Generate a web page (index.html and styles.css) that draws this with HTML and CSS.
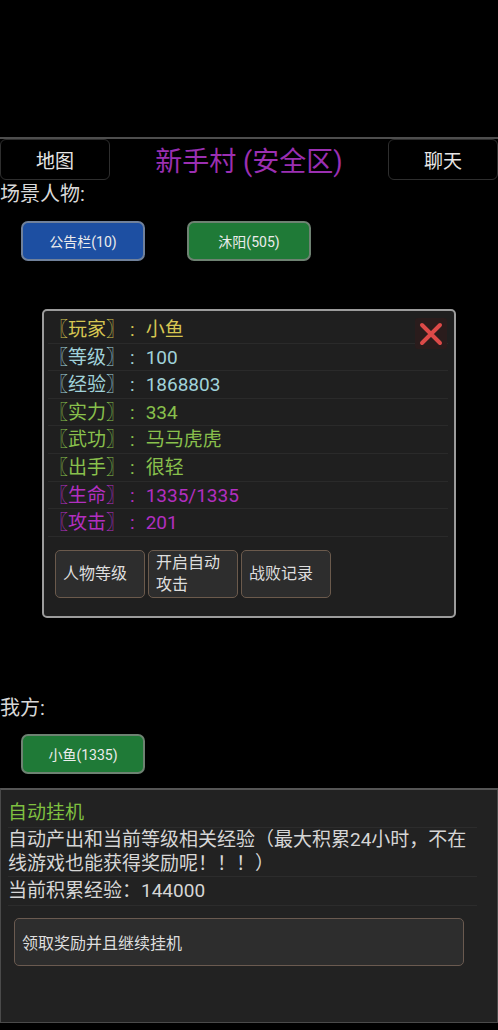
FILE: index.html
```html
<!DOCTYPE html>
<html lang="zh">
<head>
  <meta charset="UTF-8" />
  <meta name="viewport" content="width=device-width, initial-scale=1.0" />
  <title>新手村</title>
  <link rel="stylesheet" href="styles.css">
</head>
<body>

<div class="top-space"></div>

<!-- 顶部栏 -->
<div class="header">
  <div class="hbtn">地图</div>
  <div class="title">新手村 (安全区)</div>
  <div class="hbtn">聊天</div>
</div>

<div class="label">场景人物:</div>
<div class="chars">
  <div class="cbtn cbtn-blue">公告栏(10)</div>
  <div class="cbtn cbtn-green">沐阳(505)</div>
</div>

<!-- 人物信息窗口 -->
<div class="dialog">
  <div class="close">
    <svg width="24" height="24" viewBox="0 0 24 24"><path d="M3 3 L21 21 M21 3 L3 21" stroke="#dc4a48" stroke-width="4" stroke-linecap="round"/></svg>
  </div>
  <div class="rows">
    <div class="row c-yellow">〖玩家〗<span class="sep">:</span>小鱼</div>
    <div class="row c-cyan">〖等级〗<span class="sep">:</span>100</div>
    <div class="row c-cyan">〖经验〗<span class="sep">:</span>1868803</div>
    <div class="row c-green">〖实力〗<span class="sep">:</span>334</div>
    <div class="row c-green">〖武功〗<span class="sep">:</span>马马虎虎</div>
    <div class="row c-green">〖出手〗<span class="sep">:</span>很轻</div>
    <div class="row c-pink">〖生命〗<span class="sep">:</span>1335/1335</div>
    <div class="row c-pink">〖攻击〗<span class="sep">:</span>201</div>
  </div>
  <div class="actions">
    <div class="abtn">人物等级</div>
    <div class="abtn">开启自动<br>攻击</div>
    <div class="abtn">战败记录</div>
  </div>
</div>

<div class="label label-self">我方:</div>
<div class="chars chars-self">
  <div class="cbtn cbtn-green">小鱼(1335)</div>
</div>

<!-- 自动挂机 -->
<div class="panel">
  <div class="prow p-title">自动挂机</div>
  <div class="prow p-text">自动产出和当前等级相关经验（最大积累24小时，不在线游戏也能获得奖励呢！！！）</div>
  <div class="prow">当前积累经验：144000</div>
  <div class="wide-btn">领取奖励并且继续挂机</div>
</div>

</body>
</html>
```

FILE: styles.css
```css
body { margin: 0; background: #000; color: #dcdcdc; font-family: Roboto, "Noto Sans CJK SC", sans-serif; width: 498px; height: 1030px; overflow: hidden; }
.top-space { height: 137px; border-bottom: 2px solid #4e4e4e; }
.header { display: flex; justify-content: space-between; align-items: center; height: 41px; }
.hbtn { width: 108px; height: 39px; border: 1px solid #2e2e2e; border-radius: 6px; display: flex; align-items: center; justify-content: center; font-size: 19px; color: #e6e6e6; }
.title { color: #9b2fb2; font-size: 27px; }
.label { font-size: 20px; line-height: 24px; margin-top: 2px; color: #d8d8d8; }
.chars { display: flex; gap: 42px; padding-left: 21px; margin-top: 15px; }
.cbtn { width: 120px; height: 36px; border: 2px solid #6f7c8a; border-radius: 7px; display: flex; align-items: center; justify-content: center; font-size: 14px; color: #ececec; }
.cbtn-blue { background: #1d4fa2; border-color: #70819b; }
.cbtn-green { background: #1f7a37; border-color: #6e8272; }
/* 窗口 */
.dialog { position: relative; margin: 48px 0 0 42px; width: 410px; height: 305px; border: 2px solid #9c9c9c; border-radius: 5px; background: #1f1f1f; }
.close { position: absolute; top: 7px; right: 7px; width: 32px; height: 31px; background: #2a1c1c; border-radius: 3px; display: flex; align-items: center; justify-content: center; }
.rows { margin: 5px 6px 0 4px; }
.row { height: 27.6px; line-height: 27.6px; box-sizing: border-box; border-bottom: 1px solid #2a2a2a; padding-left: 1px; font-size: 19px; }
.sep { margin: 0 11px 0 5px; }
.c-yellow { color: #d6c652; }
.c-cyan { color: #a0d2da; }
.c-green { color: #89c04c; }
.c-pink { color: #b22fc0; }
.actions { display: flex; gap: 3px; margin: 13px 0 0 11px; }
.abtn { height: 46px; border: 1px solid #6b5a4c; border-radius: 5px; background: #2d2d2d; display: flex; align-items: center; padding-left: 7px; width: 81px; font-size: 16px; line-height: 22px; color: #dedede; }
.label-self { margin-top: 78px; }
.chars-self { margin-top: 14px; }
/* 底部面板 */
.panel { margin-top: 14px; height: 223px; border: 1px solid #4a4a4a; border-top: 2px solid #555; background: #222; padding: 9px 20px 0 7px; }
.prow { font-size: 19px; line-height: 28px; border-bottom: 1px solid #2c2c2c; color: #d6d6d6; }
.p-title { color: #7fc040; }
.p-text { line-height: 24px; }
.wide-btn { margin: 12px 0 0 6px; width: 441px; height: 46px; border: 1px solid #6a5a50; border-radius: 5px; background: #2d2d2d; display: flex; align-items: center; padding-left: 7px; font-size: 16px; color: #dedede; }
```
